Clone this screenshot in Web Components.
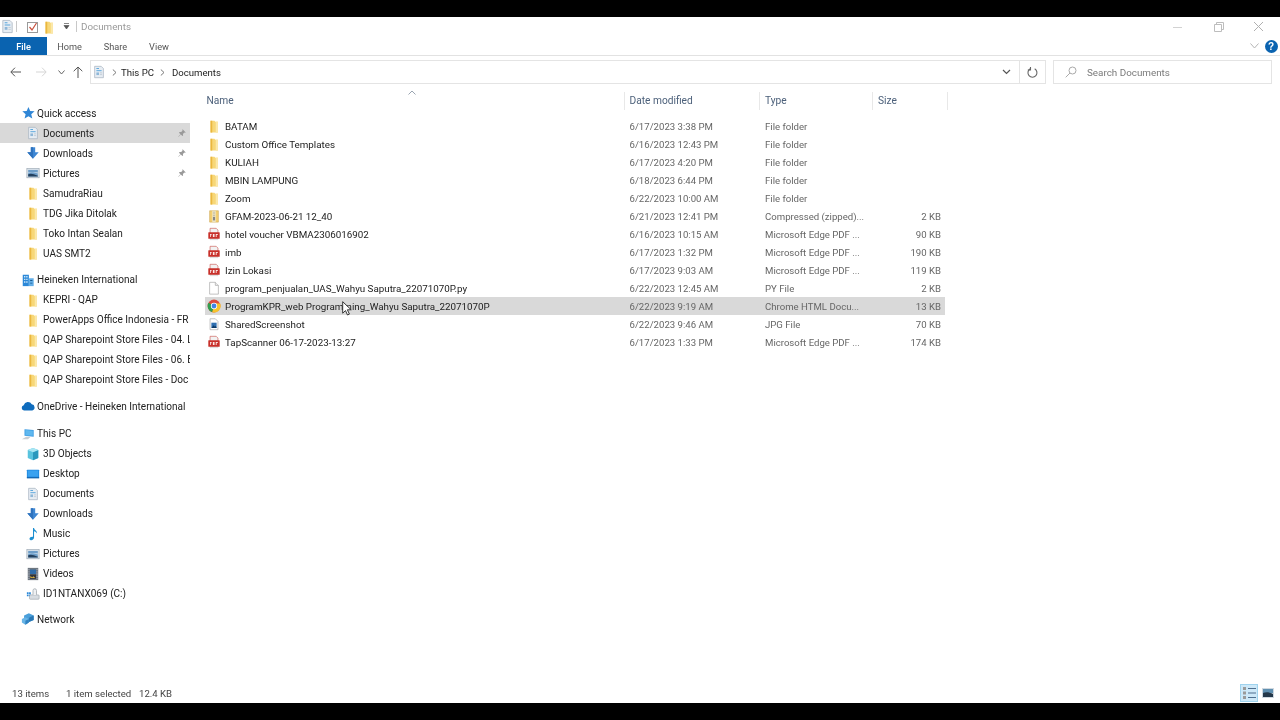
<!DOCTYPE html>
<html><head><meta charset="utf-8">
<style>
html,body{margin:0;height:100%;background:#000;overflow:hidden}
body{font-family:Roboto,"Noto Sans",sans-serif;font-size:10.05px}
</style></head><body>
<x-app></x-app>
<script>
const I={
folder:`<svg viewBox="0 0 16 16"><path d="M4 2h4.500l1 1H12.500v12.500H4z" fill="#f7d778"/><path d="M4 2h2v13.500H4z" fill="#eab73f"/><path d="M10 3h2.500v12.500H10z" fill="#fbe8ab"/></svg>`,
zip:`<svg viewBox="0 0 16 16"><path d="M3 2h10v13H3z" fill="#f3cf72" stroke="#c9a24a" stroke-width=".6"/><path d="M6 2h4v13H6z" fill="#ede4c4"/><path d="M7.500 3h1v1h-1zM7.500 5h1v1h-1zM7.500 7h1v1h-1z" fill="#777"/><rect x="6.800" y="9" width="2.400" height="4" fill="#888"/></svg>`,
pdf:`<svg viewBox="0 0 16 16"><path d="M3.500 1.500h7l2 2v4h-9z" fill="#f2f2f2" stroke="#c8524c" stroke-width=".7"/><path d="M3.500 13h9v1.500h-9z" fill="#e8e8e8" stroke="#bbb" stroke-width=".4"/><rect x="1.500" y="6" width="13" height="7.500" rx=".7" fill="#c8302a"/><path d="M3.500 8h1.700v1.500H3.500zM3.500 9.500h.9V11.500h-.9zM6.700 8h1.900v3.500H6.700zM10 8h2.300v1H10zM10 9v2.500h1V9z" fill="#fbe9e7"/></svg>`,
py:`<svg viewBox="0 0 16 16"><path d="M3 1.500h6.500l3.500 3.500v10H3z" fill="#fff" stroke="#a8a8a8" stroke-width=".8"/><path d="M9.500 1.500V5h3.500" fill="#f0f0f0" stroke="#a8a8a8" stroke-width=".8"/></svg>`,
chrome:`<svg viewBox="0 0 16 16"><circle cx="8" cy="8" r="7.300" fill="#dd4b3e"/><path d="M8 8 1.700 4.400A7.300 7.300 0 0 0 6 15z" fill="#2f9e4f"/><path d="M8 8 6 15A7.300 7.300 0 0 0 15 5.200H8z" fill="#f6c32c"/><circle cx="8" cy="8" r="3.600" fill="#fff"/><circle cx="8" cy="8" r="2.800" fill="#3f83e6"/></svg>`,
jpg:`<svg viewBox="0 0 16 16"><path d="M3.500 2h6l3 3v9.500h-9z" fill="#fff" stroke="#a8a8a8" stroke-width=".8"/><rect x="5" y="6.500" width="6" height="6" fill="#2f6fb0"/><path d="M5 12.500l2.500-3 1.500 1.500 1-1 1 2.500z" fill="#0c3a66"/></svg>`,
doc:`<svg viewBox="0 0 16 16"><path d="M3 1.500h7.500l2.500 2.500v10.500H3z" fill="#e7edf3" stroke="#a5b2bf" stroke-width=".8"/><path d="M5 4h3M5 6.500h6" stroke="#5aa5dc" stroke-width="1.100"/><rect x="5" y="8.500" width="3" height="3" fill="#8fb7d8"/><path d="M9 9h2.500M9 11h2.500" stroke="#b4c0cb" stroke-width=".8"/></svg>`,
dl:`<svg viewBox="0 0 16 16"><path d="M5.500 1.500h5V7h4L8 14.500 1.500 7h4z" fill="#3d86d3"/><path d="M5.500 1.500h2.500v13L1.500 7h4z" fill="#2e72bd"/></svg>`,
pic:`<svg viewBox="0 0 16 16"><rect x="1" y="3" width="14" height="10.500" fill="#dbe3ea" stroke="#93a1ae" stroke-width=".7"/><rect x="2.500" y="4.500" width="11" height="7.500" fill="#6d9dc8"/><path d="M2.500 12V9.500c3-1.500 6-.5 11 1.500v1z" fill="#23405e"/><path d="M2.500 8c3-1 6-.8 11 .5V7H2.500z" fill="#c9dcec"/></svg>`,
star:`<svg viewBox="0 0 16 16"><path d="M8.500 1l2 4.700 5 .4-3.800 3.300 1.200 5-4.400-2.700-4.400 2.700 1.200-5L1.500 6.100l5-.4z" fill="#2f86d6"/></svg>`,
org:`<svg viewBox="0 0 16 16"><rect x="2" y="2" width="7" height="13" fill="#2b88d8"/><rect x="9" y="6" width="5.500" height="9" fill="#63aee8"/><path d="M3.500 3.500h1.500v1.500H3.500zM6 3.500h1.500v1.500H6zM3.500 6.500h1.500V8H3.500zM6 6.500h1.500V8H6zM3.500 9.500h1.500V11H3.500zM6 9.500h1.500V11H6z" fill="#d9ecfa"/><path d="M10.500 8h2.500v1h-2.500zM10.500 11h2.500v1h-2.500z" fill="#14598f"/></svg>`,
cloud:`<svg viewBox="0 0 16 16"><path d="M3.500 13a3 3 0 0 1-.4-5.900 5 5 0 0 1 9.200-1 3.500 3.500 0 0 1 .5 6.900z" fill="#0f6cbd"/></svg>`,
pc:`<svg viewBox="0 0 16 16"><path d="M4 2.500l10.500 1v7.500L4 10z" fill="#3a9be3"/><path d="M5 3.500l8.500.8V10L5 9.300z" fill="#5fb8ef"/><path d="M1 14l5-3h5l-3 3z" fill="#c8ced4"/></svg>`,
obj:`<svg viewBox="0 0 16 16"><path d="M8 1l6 2.500v9L8 15l-6-2.500v-9z" fill="#59c3de"/><path d="M8 6v9l6-2.500v-9z" fill="#2a98bd"/><path d="M2 3.500 8 6l6-2.500L8 1z" fill="#a8e6f3"/></svg>`,
desk:`<svg viewBox="0 0 16 16"><rect x="1" y="3" width="14" height="9.500" rx=".6" fill="#1e88e0"/><rect x="1" y="11.500" width="14" height="1.500" fill="#1568b2"/><rect x="2" y="4" width="12" height="7" fill="#3aa2f0"/></svg>`,
music:`<svg viewBox="0 0 16 16"><path d="M8 1h1.200c.3 2.500 3.800 3 3.300 6.500-.6-1.700-2-2.500-3.300-2.700v7.200c0 1.700-1.500 3-3.200 3-1.100 0-2-.6-2-1.700 0-1.500 1.700-2.500 4-2.200z" fill="#1d8fd1"/></svg>`,
vid:`<svg viewBox="0 0 16 16"><rect x="2" y="1" width="12" height="14" fill="#6e7780"/><rect x="4.500" y="3" width="7" height="5" fill="#2f6ca8"/><rect x="4.500" y="8.500" width="7" height="5" fill="#30343a"/><path d="M5 10l2 2 1.500-1.500 2 2H5z" fill="#d3ac3d"/><path d="M3 2.500h.8v1H3zM3 5h.8v1H3zM3 7.500h.8v1H3zM3 10h.8v1H3zM3 12.500h.8v1H3zM12.200 2.500h.8v1h-.8zM12.200 5h.8v1h-.8zM12.200 7.500h.8v1h-.8zM12.200 10h.8v1h-.8zM12.200 12.500h.8v1h-.8z" fill="#dde"/></svg>`,
drive:`<svg viewBox="0 0 16 16"><path d="M1 6h2v2H1zM3.500 6h2v2h-2zM1 8.500h2v2H1zM3.500 8.500h2v2h-2z" fill="#2b88d8"/><rect x="4" y="9" width="11" height="5" rx="1" fill="#d8dde2" stroke="#8c959d" stroke-width=".6"/><path d="M8 9V4a2 2 0 0 1 4 0v5" fill="#eef0f2" stroke="#a9b0b6" stroke-width="1"/></svg>`,
net:`<svg viewBox="0 0 16 16"><path d="M9 1.500l5.500 2.500v5L9 11.500 3.500 9V4z" fill="#4b9fda"/><path d="M9 6.500v5l5.500-2.500V4z" fill="#2a78b5"/><path d="M1 8l4-2 4 2v4l-4 2.500L1 12z" fill="#68b4e6"/><path d="M5 10v4.500L9 12V8z" fill="#2f82c2"/></svg>`,
pin:`<svg viewBox="0 0 16 16"><path d="M9 2l5 5-1.200.6-1-.5-2.300 2.300.2 2.400-1.100 1.100-2.500-2.500L2.500 14l-.5-.5 3.600-3.600-2.500-2.500 1.100-1.100 2.400.2L8.900 4.200l-.5-1z" fill="#9a9a9a"/></svg>`
};
class XIcon extends HTMLElement{constructor(){super();this.attachShadow({mode:'open'})}
 connectedCallback(){const s=this.getAttribute('size')||14;this.shadowRoot.innerHTML=`<style>:host{display:inline-flex;width:${s}px;height:${s}px;flex:none}svg{width:100%;height:100%;display:block}</style>${I[this.getAttribute('name')]||''}`}}
customElements.define('x-icon',XIcon);

class XTitlebar extends HTMLElement{constructor(){super();this.attachShadow({mode:'open'}).innerHTML=`<style>
:host{display:flex;align-items:center;height:19px;padding-bottom:1px;background:#fff;flex:none;color:#9a9a9a;font-size:9.8px}
.l{display:flex;align-items:center;flex:1;min-width:0}
.sep{width:1px;height:11px;background:#c8c8c8}
.w{display:flex;width:40px;justify-content:center}
svg{display:block}
</style><div class="l">
<x-icon name="doc" size="15"></x-icon><span class="sep" style="margin:0 10px 0 1px"></span>
<svg width="12" height="12" viewBox="0 0 12 12"><rect x=".5" y="1.500" width="10" height="10" fill="#fff" stroke="#9a9a9a"/><path d="M2.500 6l2.500 3 4.500-7" fill="none" stroke="#c8503c" stroke-width="1.200"/></svg>
<x-icon name="folder" size="14" style="margin-left:3px"></x-icon>
<svg width="7" height="7" viewBox="0 0 7 7" style="margin:0 6px 0 7px"><path d="M1 .5h5M1 2.500h5L3.500 6z" fill="#555" stroke="#555" stroke-width=".7"/></svg>
<span class="sep" style="margin-right:4px"></span><span>Documents</span></div>
<div class="w"><svg width="10" height="10" viewBox="0 0 10 10"><path d="M0 5.500h9" stroke="#d2d2d2"/></svg></div>
<div class="w" style="padding-left:1px;width:39px"><svg width="10" height="10" viewBox="0 0 10 10"><path d="M.5 2.500h7v7h-7zM2.500 2.500v-2h7v7h-2" fill="none" stroke="#bdbdbd"/></svg></div>
<div class="w"><svg width="11" height="11" viewBox="0 0 11 11"><path d="M1 1l9 9M10 1l-9 9" stroke="#b0b0b0"/></svg></div>
<span style="width:2px"></span>`}}
customElements.define('x-titlebar',XTitlebar);

class XRibbon extends HTMLElement{constructor(){super();this.attachShadow({mode:'open'}).innerHTML=`<style>
:host{display:flex;align-items:center;height:18px;background:#fff;border-bottom:1px solid #e2e2e2;flex:none;font-size:9.2px;color:#555}
.file{width:47px;height:18px;background:#0a63b0;color:#fff;display:flex;align-items:center;justify-content:center;font-weight:500}
.tab{text-align:center}
.sp{flex:1}
.help{width:13px;height:13px;border-radius:50%;background:#0a63b0;color:#fff;font:bold 10px "Liberation Sans",sans-serif;display:flex;align-items:center;justify-content:center;margin:0 2.500px 0 6px}
</style><div class="file">File</div><div class="tab" style="width:45px">Home</div><div class="tab" style="width:47px">Share</div><div class="tab" style="width:40px">View</div><span class="sp"></span>
<svg width="9" height="6" viewBox="0 0 9 6"><path d="M.5.500 4.500 5 8.500.500" fill="none" stroke="#b5b5b5"/></svg><div class="help">?</div>`}}
customElements.define('x-ribbon',XRibbon);

class XNavbar extends HTMLElement{constructor(){super();this.attachShadow({mode:'open'}).innerHTML=`<style>
:host{display:flex;align-items:center;height:24px;margin-top:4px;background:#fff;flex:none;color:#222;font-size:9.6px}
.b{display:flex;align-items:center;justify-content:center;flex:none}
.addr{margin-left:4px;width:930px;height:24px;box-sizing:border-box;border:1px solid #e4e4e4;display:flex;align-items:center;padding-left:1px}
.rf{width:26px;height:24px;box-sizing:border-box;border:1px solid #e4e4e4;border-left:0}
.sr{margin-left:7px;width:219px;height:24px;box-sizing:border-box;border:1px solid #e4e4e4;display:flex;align-items:center;padding-left:11px;color:#7a7a7a;font-size:9.85px}
.sp{flex:1}
</style>
<div class="b" style="width:31px"><svg width="11" height="10" viewBox="0 0 11 10"><path d="M11 5H1M5 .7 .8 5 5 9.300" fill="none" stroke="#555"/></svg></div>
<div class="b" style="width:21px"><svg width="11" height="10" viewBox="0 0 11 10"><path d="M0 5h10M6 .7 10.200 5 6 9.300" fill="none" stroke="#d5d5d5"/></svg></div>
<div class="b" style="width:18px"><svg width="7" height="5" viewBox="0 0 7 5"><path d="M.5.500 3.500 4 6.500.500" fill="none" stroke="#666"/></svg></div>
<div class="b" style="width:16px"><svg width="10" height="12" viewBox="0 0 10 12"><path d="M5 12V1M.7 5.200 5 1l4.300 4.200" fill="none" stroke="#555"/></svg></div>
<div class="addr"><x-icon name="doc" size="14"></x-icon>
<svg width="5" height="7" viewBox="0 0 5 7" style="margin:0 4px 0 6px"><path d="M.8.500 4 3.500.8 6.500" fill="none" stroke="#777"/></svg><span>This PC</span>
<svg width="5" height="7" viewBox="0 0 5 7" style="margin:0 7px 0 6px"><path d="M.8.500 4 3.500.8 6.500" fill="none" stroke="#777"/></svg><span>Documents</span><span class="sp"></span>
<svg width="9" height="6" viewBox="0 0 9 6" style="margin-right:8px"><path d="M1 1l3.500 3.500L8 1" fill="none" stroke="#555" stroke-width="1.200"/></svg></div>
<div class="b rf"><svg width="11" height="11" viewBox="0 0 11 11"><path d="M3.200 1.800a4.500 4.500 0 1 0 4.500 0" fill="none" stroke="#666" stroke-width="1.100"/><path d="M3.500 0v3H.8" fill="none" stroke="#666" stroke-width="1.100"/></svg></div>
<div class="sr"><svg width="12" height="12" viewBox="0 0 12 12" style="margin-right:10px"><circle cx="7.500" cy="4.500" r="3.500" fill="none" stroke="#aaa"/><path d="M5 7 .7 11.300" stroke="#aaa"/></svg>Search Documents</div>`}}
customElements.define('x-navbar',XNavbar);

class XNavItem extends HTMLElement{constructor(){super();this.attachShadow({mode:'open'})}
 connectedCallback(){
  const top=this.hasAttribute('top'),sel=this.hasAttribute('selected'),pin=this.hasAttribute('pin');
  this.shadowRoot.innerHTML=`<style>
  :host{display:flex;align-items:center;height:20px;width:190px;box-sizing:border-box;padding-left:${top?21:26}px;background:${sel?'#d9d9d9':'transparent'};flex:none}
  .t{margin-left:${top?2:3}px;flex:1;min-width:0;white-space:nowrap;overflow:hidden;color:#222}
  .p{margin:0 3px 0 3px}
  </style><x-icon name="${this.getAttribute('icon')}"></x-icon><span class="t"><slot></slot></span>${pin?'<x-icon class="p" name="pin" size="10"></x-icon>':''}`;
 }}
customElements.define('x-nav-item',XNavItem);

class XSidebar extends HTMLElement{constructor(){super();
 const g=[
 [['star','Quick access',1],['doc','Documents',0,1,1],['dl','Downloads',0,0,1],['pic','Pictures',0,0,1],['folder','SamudraRiau'],['folder','TDG Jika Ditolak'],['folder','Toko Intan Sealan'],['folder','UAS SMT2']],
 [['org','Heineken International',1],['folder','KEPRI - QAP'],['folder','PowerApps Office Indonesia - FR'],['folder','QAP Sharepoint Store Files - 04. L'],['folder','QAP Sharepoint Store Files - 06. E'],['folder','QAP Sharepoint Store Files - Doc']],
 [['cloud','OneDrive - Heineken International',1]],
 [['pc','This PC',1],['obj','3D Objects'],['desk','Desktop'],['doc','Documents'],['dl','Downloads'],['music','Music'],['pic','Pictures'],['vid','Videos'],['drive','ID1NTANX069 (C:)']],
 [['net','Network',1]]];
 this.attachShadow({mode:'open'}).innerHTML=`<style>
 :host{display:flex;flex-direction:column;gap:6.5px;width:190px;flex:none;padding-top:19.4px;box-sizing:border-box}
 .g{display:flex;flex-direction:column}
 .g:nth-of-type(4){margin-top:.7px}
 .g:nth-of-type(5){margin-top:-.7px}
 </style>`+g.map(x=>`<div class="g">${x.map(([i,t,top,s,p])=>`<x-nav-item icon="${i}" ${top?'top':''} ${s?'selected':''} ${p?'pin':''}>${t}</x-nav-item>`).join('')}</div>`).join('');
}}
customElements.define('x-sidebar',XSidebar);

class XFileRow extends HTMLElement{constructor(){super();this.attachShadow({mode:'open'})}
 connectedCallback(){
  const a=n=>this.getAttribute(n)||'';const sel=this.hasAttribute('selected');
  this.shadowRoot.innerHTML=`<style>
  :host{display:grid;grid-template-columns:419.5px 135.5px 113px 72px;height:18px;align-items:center;background:${sel?'#d9d9d9':'transparent'};color:#666;white-space:nowrap;font-size:9.6px}
  .n{display:flex;align-items:center;color:#222;padding-left:2px;gap:4px;font-size:9.8px}
  .d{padding-left:5px}.y{padding-left:5px}.s{text-align:right;padding-right:4px}
  </style><div class="n"><x-icon name="${a('icon')}"></x-icon><span><slot></slot></span></div><div class="d">${a('date')}</div><div class="y">${a('type')}</div><div class="s">${a('size')}</div>`;
 }}
customElements.define('x-file-row',XFileRow);

class XFileList extends HTMLElement{constructor(){super();
 const F='File folder',E='Microsoft Edge PDF ...';
 const rows=[['folder','BATAM','6/17/2023 3:38 PM',F,''],['folder','Custom Office Templates','6/16/2023 12:43 PM',F,''],['folder','KULIAH','6/17/2023 4:20 PM',F,''],['folder','MBIN LAMPUNG','6/18/2023 6:44 PM',F,''],['folder','Zoom','6/22/2023 10:00 AM',F,''],['zip','GFAM-2023-06-21 12_40','6/21/2023 12:41 PM','Compressed (zipped)...','2 KB'],['pdf','hotel voucher VBMA2306016902','6/16/2023 10:15 AM',E,'90 KB'],['pdf','imb','6/17/2023 1:32 PM',E,'190 KB'],['pdf','Izin Lokasi','6/17/2023 9:03 AM',E,'119 KB'],['py','program_penjualan_UAS_Wahyu Saputra_22071070P.py','6/22/2023 12:45 AM','PY File','2 KB'],['chrome','ProgramKPR_web Programming_Wahyu Saputra_22071070P','6/22/2023 9:19 AM','Chrome HTML Docu...','13 KB',1],['jpg','SharedScreenshot','6/22/2023 9:46 AM','JPG File','70 KB'],['pdf','TapScanner 06-17-2023-13:27','6/17/2023 1:33 PM',E,'174 KB']];
 this.attachShadow({mode:'open'}).innerHTML=`<style>
 :host{display:block;flex:1;min-width:0;padding:8px 0 0 15px;position:relative;font-size:10.2px}
 .h{display:grid;grid-template-columns:419.5px 135px 113px 75px;height:18px;width:742.5px;align-items:center;color:#4c607a;position:relative}
 .h div{height:18px;line-height:18px;box-sizing:border-box;border-right:1px solid #e8e8e8}
 .h div:first-child{padding-left:1.5px}.h div:nth-child(2){padding-left:5px}.h div:nth-child(3){padding-left:5.5px}.h div:nth-child(4){padding-left:5.5px}
 .sort{position:absolute;left:203px;top:-2px;display:block}
 .rows{margin-top:7px;width:740px;display:flex;flex-direction:column}
 .cur{position:absolute;left:152px;top:217px}
 </style><div class="h"><div>Name</div><div>Date modified</div><div>Type</div><div>Size</div>
 <svg class="sort" width="8" height="5" viewBox="0 0 8 5"><path d="M.5 4.500 4 1l3.500 3.500" fill="none" stroke="#9aa5b1"/></svg></div>
 <div class="rows">${rows.map(r=>`<x-file-row icon="${r[0]}" date="${r[2]}" type="${r[3]}" size="${r[4]}" ${r[5]?'selected':''}>${r[1]}</x-file-row>`).join('')}</div>
 <svg class="cur" width="10" height="15" viewBox="0 0 10 15"><path d="M.7.700v11.500l2.800-2.600 2 4.400 1.900-.9-2-4.300h3.800z" fill="#fff" stroke="#222" stroke-width=".9"/></svg>`;
}}
customElements.define('x-file-list',XFileList);

class XStatusbar extends HTMLElement{constructor(){super();this.attachShadow({mode:'open'}).innerHTML=`<style>
:host{display:flex;align-items:center;height:20px;background:#fff;flex:none;color:#444;padding-left:12px;white-space:nowrap;font-size:9.6px}
.sp{flex:1}
.a{width:54px}.b{width:73px}
.v{width:18px;height:18px;box-sizing:border-box;display:flex;align-items:center;justify-content:center}
.on{background:#cde8f8;border:1px solid #9fd3ee}
svg{display:block}
</style><span class="a">13 items</span><span class="b">1 item selected</span><span>12.4 KB</span><span class="sp"></span>
<div class="v on"><svg width="13" height="12" viewBox="0 0 13 12"><path d="M0 0h3v3H0zM0 4.500h3v3H0zM0 9h3v3H0z" fill="#9a9a9a"/><path d="M5 1.500h8M5 6h8M5 10.500h8" stroke="#4f6f8f"/></svg></div>
<div class="v" style="margin:0 6px 0 3px;width:13px"><svg width="12" height="10" viewBox="0 0 12 10"><rect width="12" height="10" fill="#cfd8e0"/><path d="M1 1h10v4H1z" fill="#5f8fb0"/><path d="M1 5c3-1 6-1 10 1v3H1z" fill="#24384a"/></svg></div>`}}
customElements.define('x-statusbar',XStatusbar);

class XApp extends HTMLElement{constructor(){super();this.attachShadow({mode:'open'}).innerHTML=`<style>
:host{display:flex;flex-direction:column;height:720px;box-sizing:border-box;padding:17px 0;background:#000}
.w{flex:1;min-height:0;display:flex;flex-direction:column;background:#fff;filter:blur(.3px)}
.m{flex:1;min-height:0;display:flex;background:#fff}
</style><div class="w"><x-titlebar></x-titlebar><x-ribbon></x-ribbon><x-navbar></x-navbar><div class="m"><x-sidebar></x-sidebar><x-file-list></x-file-list></div><x-statusbar></x-statusbar></div>`}}
customElements.define('x-app',XApp);
</script>
</body></html>
